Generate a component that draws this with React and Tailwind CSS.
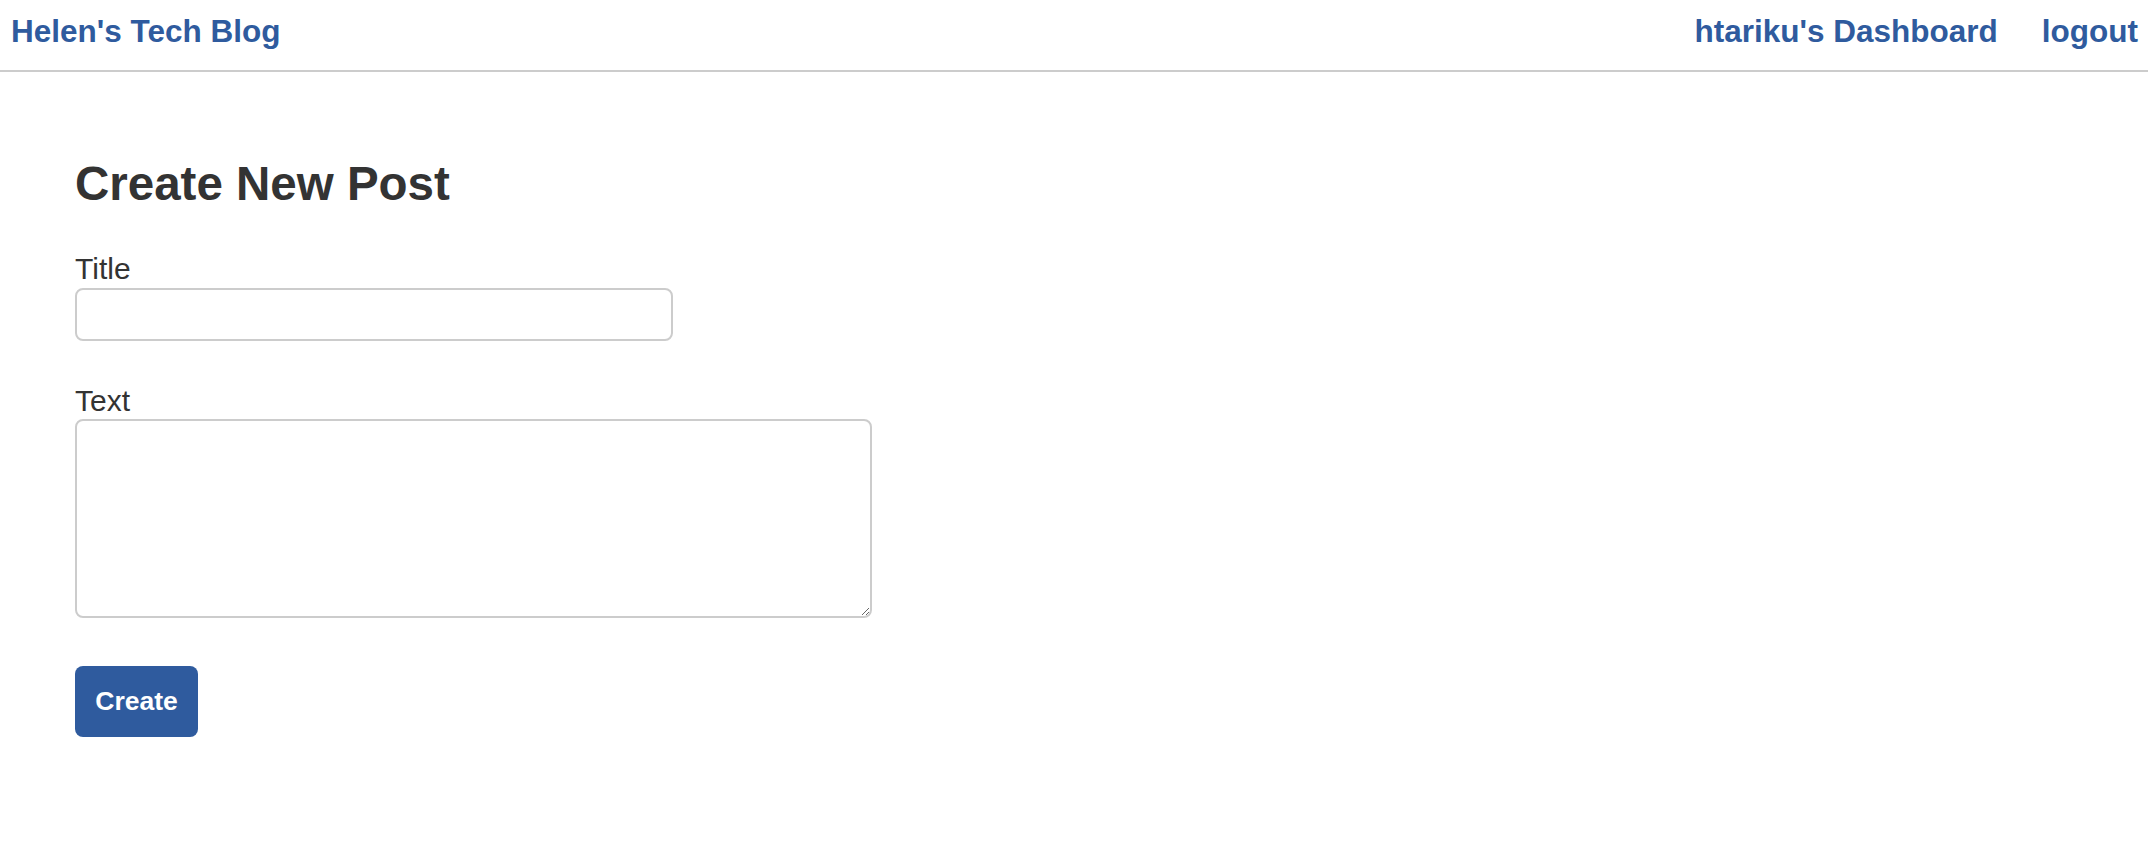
import { useState } from 'react';

const Header = () => {
  return (
    <header className="h-[72px] border-b-2 border-[#cccccc] flex justify-between items-start pt-[13px] pl-[11px] pr-[10px]">
      <a href="#" className="text-[31.5px] leading-[36px] font-bold text-[#2f5b9e]">
        Helen's Tech Blog
      </a>
      <nav className="flex gap-[44px]">
        <a href="#" className="text-[31.5px] leading-[36px] font-bold text-[#2f5b9e]">
          htariku's Dashboard
        </a>
        <a href="#" className="text-[31.5px] leading-[36px] font-bold text-[#2f5b9e]">
          logout
        </a>
      </nav>
    </header>
  );
};

const App = () => {
  const [title, setTitle] = useState('');
  const [text, setText] = useState('');

  return (
    <div className="min-h-screen bg-white text-[#333333] font-['Liberation_Sans',Arial,sans-serif]">
      <Header />

      {/* New post form */}
      <main className="pl-[75px] pt-[84px]">
        <h1 className="text-[47.5px] leading-[56px] font-bold mb-[40px]">Create New Post</h1>
        <form onSubmit={(e) => e.preventDefault()}>
          <div className="mb-[43px]">
            <label htmlFor="title" className="block text-[30px] leading-[34px] mb-[2px]">
              Title
            </label>
            <input
              id="title"
              type="text"
              value={title}
              onChange={(e) => setTitle(e.target.value)}
              className="block w-[598px] h-[53px] border-2 border-[#cccccc] rounded-[8px] px-3 text-[24px] outline-none"
            />
          </div>
          <div className="mb-[48px]">
            <label htmlFor="text" className="block text-[30px] leading-[34px] mb-[1px]">
              Text
            </label>
            <textarea
              id="text"
              value={text}
              onChange={(e) => setText(e.target.value)}
              className="block w-[797px] h-[199px] border-2 border-[#cccccc] rounded-[8px] px-3 py-2 text-[24px] outline-none"
            />
          </div>
          <button
            type="submit"
            className="h-[71px] w-[123px] bg-[#2f5b9e] text-white text-[26.5px] font-bold rounded-[8px] flex items-center justify-center"
          >
            Create
          </button>
        </form>
      </main>
    </div>
  );
};

export default App;
